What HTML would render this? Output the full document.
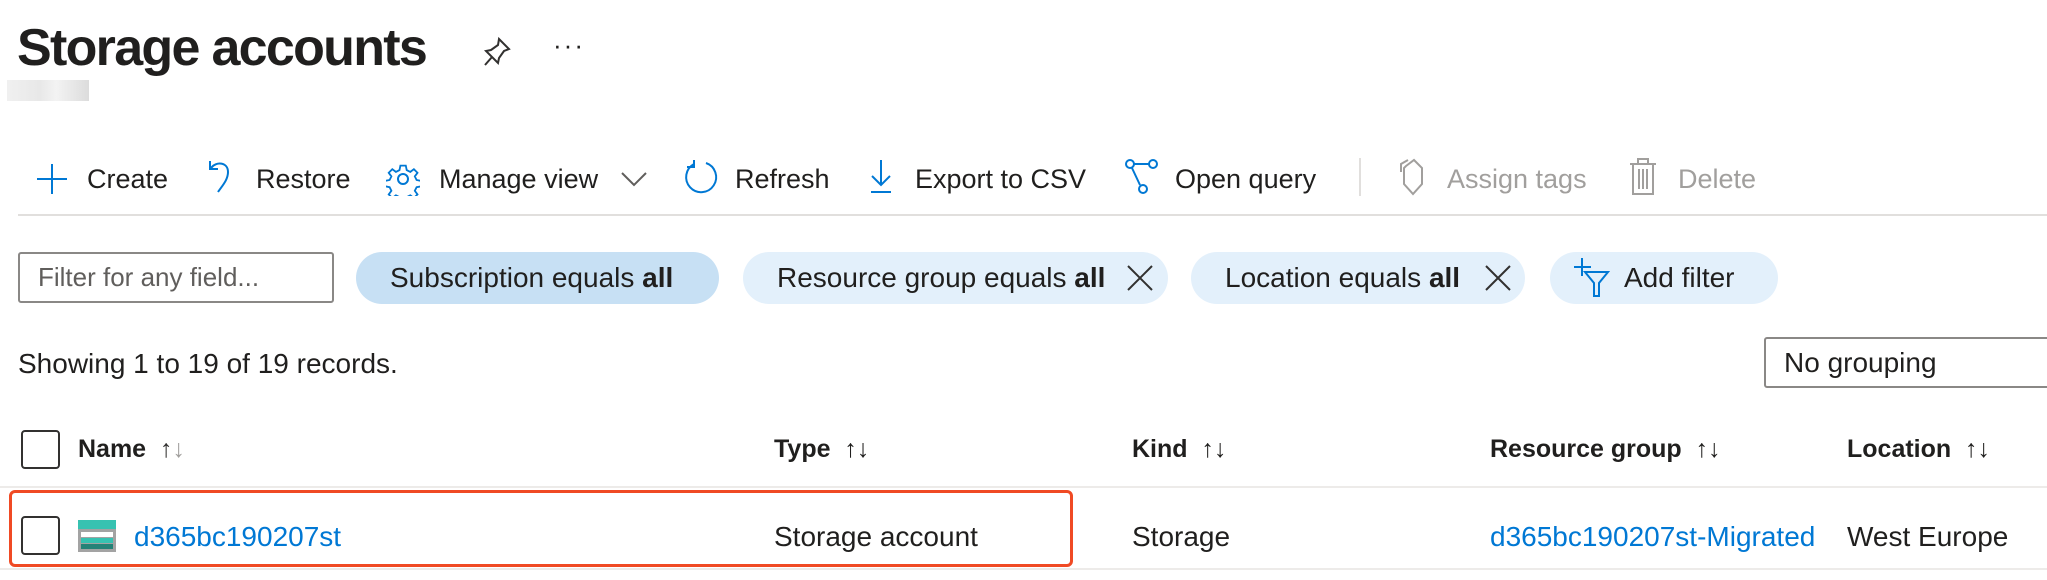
<!DOCTYPE html>
<html><head><meta charset="utf-8"><style>
*{margin:0;padding:0;box-sizing:border-box}
body{width:2047px;height:580px;overflow:hidden;background:#fff;font-family:"Liberation Sans",sans-serif;color:#201f1e;position:relative}
.a{position:absolute;white-space:nowrap}
.t{font-size:27px;line-height:30px}
.d{font-size:28px;line-height:32px}
.tb{top:164px}
.dis{color:#a19f9d}
.pill{position:absolute;top:252px;height:52px;border-radius:26px;background:#e3f0fb;font-size:28px;line-height:52px;padding-left:34px}
.b{font-weight:bold}
.h{top:434px;font-size:25px;font-weight:bold;line-height:30px}
.cb{position:absolute;width:39px;height:39px;border:2px solid #323130;border-radius:4px}
.blue{color:#0078d4}
svg{position:absolute}
</style></head><body>
<div class="a" style="left:17px;top:16px;font-size:52px;font-weight:bold;letter-spacing:-1.7px;line-height:64px">Storage accounts</div>
<svg style="left:482px;top:36px" width="30" height="32" viewBox="0 0 30 32"><path d="M17 3 L27 13 L22 15 L17 22 L16 27 L4 15 L9 14 L16 9 Z M10 21 L3 29" fill="none" stroke="#323130" stroke-width="2"/></svg>
<div class="a" style="left:553px;top:30px;font-size:26px;letter-spacing:2px">···</div>
<div class="a" style="left:7px;top:80px;width:82px;height:21px;background:linear-gradient(90deg,#f0f0f0,#e8e8e8 40%,#f3f3f3 60%,#dcdcdc)"></div>

<!-- toolbar -->
<svg style="left:36px;top:163px" width="32" height="32"><path d="M16 1V31M1 16H31" stroke="#0078d4" stroke-width="2"/></svg>
<div class="a t tb" style="left:87px">Create</div>
<svg style="left:206px;top:158px" width="30" height="36"><path d="M4 3 L4 11 L12 11 M5 10 C10 3 22 4 22 14 C22 22 16 28 12 34" fill="none" stroke="#0078d4" stroke-width="2"/></svg>
<div class="a t tb" style="left:256px">Restore</div>
<svg style="left:386px;top:162px" width="34" height="34" viewBox="0 0 34 34"><circle cx="17" cy="17" r="5" fill="none" stroke="#0078d4" stroke-width="2"/><path d="M14 2h6l1 5 4 2 4-3 4 4-3 4 2 4 5 1v6l-5 1-2 4 3 4-4 4-4-3-4 2-1 5h-6l-1-5-4-2-4 3-4-4 3-4-2-4-5-1v-6l5-1 2-4-3-4 4-4 4 3 4-2z" fill="none" stroke="#0078d4" stroke-width="2" transform="scale(.9) translate(2 2)"/></svg>
<div class="a t tb" style="left:439px">Manage view</div>
<svg style="left:620px;top:170px" width="28" height="18"><path d="M2 3 L14 15 L26 3" fill="none" stroke="#605e5c" stroke-width="2"/></svg>
<svg style="left:682px;top:158px" width="38" height="40"><path d="M12 6 A15 15 0 1 0 24 5 M12 2 L12 9 L5 9" fill="none" stroke="#0078d4" stroke-width="2"/></svg>
<div class="a t tb" style="left:735px">Refresh</div>
<svg style="left:868px;top:158px" width="26" height="36"><path d="M13 2V27M4 18L13 27L22 18M3 34H23" fill="none" stroke="#0078d4" stroke-width="2"/></svg>
<div class="a t tb" style="left:915px">Export to CSV</div>
<svg style="left:1124px;top:158px" width="36" height="38"><circle cx="6" cy="6" r="4" fill="none" stroke="#0078d4" stroke-width="2"/><circle cx="29" cy="6" r="4" fill="none" stroke="#0078d4" stroke-width="2"/><circle cx="19" cy="31" r="4" fill="none" stroke="#0078d4" stroke-width="2"/><path d="M10 6H25M8 10L16 27" stroke="#0078d4" stroke-width="2"/></svg>
<div class="a t tb" style="left:1175px">Open query</div>
<div class="a" style="left:1359px;top:158px;width:2px;height:38px;background:#e1dfdd"></div>
<svg style="left:1398px;top:158px" width="30" height="38"><path d="M8 8 L16 2 L24 10 L24 26 L15 36 L6 26 L6 10 Z M3 14 L3 6 L10 2" fill="none" stroke="#a19f9d" stroke-width="2"/></svg>
<div class="a t tb dis" style="left:1447px">Assign tags</div>
<svg style="left:1628px;top:157px" width="30" height="40"><path d="M2 7H28M10 7V2H20V7M5 7V37H25V7M11 12V32M15 12V32M19 12V32" fill="none" stroke="#a19f9d" stroke-width="2"/></svg>
<div class="a t tb dis" style="left:1678px">Delete</div>
<div class="a" style="left:18px;top:214px;width:2029px;height:2px;background:#e1dfdd"></div>

<!-- filters -->
<div class="a" style="left:18px;top:252px;width:316px;height:51px;border:2px solid #8a8886;border-radius:3px;font-size:26px;line-height:47px;padding-left:18px;color:#605e5c">Filter for any field...</div>
<div class="pill" style="left:356px;width:363px;background:#c7e0f4">Subscription equals <span class="b">all</span></div>
<div class="pill" style="left:743px;width:425px">Resource group equals <span class="b">all</span></div>
<svg style="left:1127px;top:265px" width="26" height="26"><path d="M1 1L25 25M25 1L1 25" stroke="#323130" stroke-width="2"/></svg>
<div class="pill" style="left:1191px;width:334px">Location equals <span class="b">all</span></div>
<svg style="left:1485px;top:265px" width="26" height="26"><path d="M1 1L25 25M25 1L1 25" stroke="#323130" stroke-width="2"/></svg>
<div class="pill" style="left:1550px;width:228px;padding-left:74px">Add filter</div>
<svg style="left:1572px;top:256px" width="42" height="42"><path d="M10 2V20M2 11H19" stroke="#0078d4" stroke-width="2"/><path d="M13 16H36L27 27V40H22V27Z" fill="none" stroke="#0078d4" stroke-width="2"/></svg>

<div class="a d" style="left:18px;top:348px">Showing 1 to 19 of 19 records.</div>
<div class="a" style="left:1764px;top:337px;width:300px;height:51px;border:2px solid #8a8886;border-radius:3px;font-size:28px;line-height:47px;padding-left:18px">No grouping</div>

<!-- header -->
<div class="cb" style="left:21px;top:430px"></div>
<div class="a h" style="left:78px">Name <span style="font-weight:normal;color:#323130">&nbsp;↑</span><span style="font-weight:normal;color:#a19f9d">↓</span></div>
<div class="a h" style="left:774px">Type <span style="font-weight:normal">&nbsp;↑↓</span></div>
<div class="a h" style="left:1132px">Kind <span style="font-weight:normal">&nbsp;↑↓</span></div>
<div class="a h" style="left:1490px">Resource group <span style="font-weight:normal">&nbsp;↑↓</span></div>
<div class="a h" style="left:1847px">Location <span style="font-weight:normal">&nbsp;↑↓</span></div>
<div class="a" style="left:0;top:486px;width:2047px;height:2px;background:#edebe9"></div>

<!-- row -->
<div class="cb" style="left:21px;top:516px"></div>
<svg style="left:78px;top:520px" width="38" height="32"><rect x="0" y="0" width="38" height="9" fill="#37c2b1"/><rect x="0" y="9" width="38" height="23" fill="#a3a3a3"/><rect x="3" y="12" width="32" height="5" fill="#fff"/><rect x="3" y="18" width="32" height="5" fill="#37c2b1"/><rect x="3" y="24" width="32" height="5" fill="#258277"/></svg>
<div class="a d blue" style="left:134px;top:521px">d365bc190207st</div>
<div class="a d" style="left:774px;top:521px">Storage account</div>
<div class="a d" style="left:1132px;top:521px">Storage</div>
<div class="a d blue" style="left:1490px;top:521px">d365bc190207st-Migrated</div>
<div class="a d" style="left:1847px;top:521px">West Europe</div>
<div class="a" style="left:0;top:568px;width:2047px;height:2px;background:#edebe9"></div>
<div class="a" style="left:9px;top:490px;width:1064px;height:77px;border:3px solid #f04a24;border-radius:6px"></div>
</body></html>
